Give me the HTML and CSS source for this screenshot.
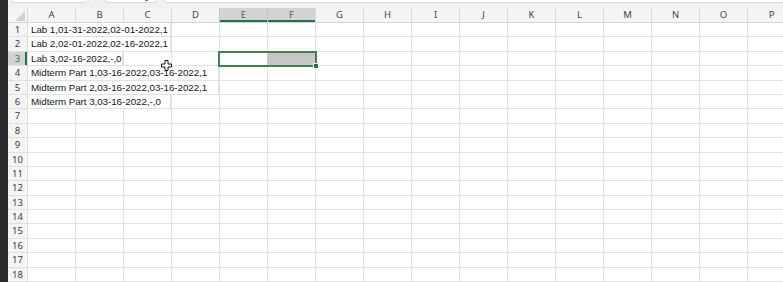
FILE: index.html
```html
<!DOCTYPE html>
<html>
<head>
<meta charset="utf-8">
<link rel="stylesheet" href="styles.css">
</head>
<body>
<div class="app">
  <div class="side"></div>
  <div class="main">
    <div class="topbar">
      <div class="box b1"></div>
      <div class="box b2"><span class="arrow"></span></div>
      <div class="box b3"></div>
    </div>
    <div class="sheet">
      <div class="hrow">
        <div class="corner"><svg width="19" height="15" viewBox="0 0 19 15"><polygon points="17,3 17,13 7,13" fill="#d0d0d0"/></svg></div>
        <div class="heads">
          <div class="ch">A</div><div class="ch">B</div><div class="ch">C</div><div class="ch">D</div>
          <div class="ch on">E</div><div class="ch on">F</div><div class="ch">G</div><div class="ch">H</div>
          <div class="ch">I</div><div class="ch">J</div><div class="ch">K</div><div class="ch">L</div>
          <div class="ch">M</div><div class="ch">N</div><div class="ch">O</div><div class="ch">P</div>
        </div>
      </div>
      <div class="row"><div class="rh">1</div><div class="cells"><div class="cell s3">Lab 1,01-31-2022,02-01-2022,1</div></div></div>
      <div class="row"><div class="rh">2</div><div class="cells"><div class="cell s3">Lab 2,02-01-2022,02-16-2022,1</div></div></div>
      <div class="row"><div class="rh on">3</div><div class="cells"><div class="cell s2">Lab 3,02-16-2022,-,0</div></div></div>
      <div class="row"><div class="rh">4</div><div class="cells"><div class="cell s4">Midterm Part 1,03-16-2022,03-16-2022,1</div></div></div>
      <div class="row"><div class="rh">5</div><div class="cells"><div class="cell s4">Midterm Part 2,03-16-2022,03-16-2022,1</div></div></div>
      <div class="row"><div class="rh">6</div><div class="cells"><div class="cell s3">Midterm Part 3,03-16-2022,-,0</div></div></div>
      <div class="row"><div class="rh">7</div><div class="cells"></div></div>
      <div class="row"><div class="rh">8</div><div class="cells"></div></div>
      <div class="row"><div class="rh">9</div><div class="cells"></div></div>
      <div class="row"><div class="rh">10</div><div class="cells"></div></div>
      <div class="row"><div class="rh">11</div><div class="cells"></div></div>
      <div class="row"><div class="rh">12</div><div class="cells"></div></div>
      <div class="row"><div class="rh">13</div><div class="cells"></div></div>
      <div class="row"><div class="rh">14</div><div class="cells"></div></div>
      <div class="row"><div class="rh">15</div><div class="cells"></div></div>
      <div class="row"><div class="rh">16</div><div class="cells"></div></div>
      <div class="row"><div class="rh">17</div><div class="cells"></div></div>
      <div class="row"><div class="rh">18</div><div class="cells"></div></div>
      <div class="sel"><div class="handle"></div></div>
      <svg class="cursor" width="11" height="11" viewBox="0 0 11 11">
        <path d="M4 0.5 H7 V4 H10.5 V7 H7 V10.5 H4 V7 H0.5 V4 H4 Z" fill="#fff" stroke="#111" stroke-width="1"/>
      </svg>
    </div>
  </div>
</div>
</body>
</html>
```
FILE: styles.css
```css
html, body {
  margin: 0;
  padding: 0;
  background: #ffffff;
}
body {
  width: 783px;
  height: 282px;
  overflow: hidden;
}
.app {
  display: flex;
  width: 783px;
  height: 282px;
  overflow: hidden;
}
.side {
  width: 8px;
  flex: none;
  background: #2a2a2c;
}
.main {
  flex: 1;
  min-width: 0;
  overflow: hidden;
  background: #ffffff;
}
.topbar {
  position: relative;
  height: 8px;
  background: #f0f0f0;
  overflow: hidden;
}
.box {
  position: absolute;
  top: -5px;
  height: 8px;
  background: #ffffff;
  border: 1px solid #d6d6d6;
  border-radius: 0 0 4px 4px;
  box-sizing: border-box;
}
.b1 { left: 2px; width: 79px; }
.b2 { left: 96px; width: 54px; }
.b3 { left: 155px; width: 640px; }
.arrow {
  position: absolute;
  left: 40px;
  top: 4px;
  width: 3px;
  height: 1px;
  background: #777;
}
.sheet {
  position: relative;
}
.hrow {
  display: flex;
  height: 15px;
  box-sizing: border-box;
  border-bottom: 1px solid #d4d4d4;
  background: #f5f5f5;
}
.corner {
  width: 19px;
  flex: none;
  height: 14px;
  overflow: hidden;
}
.corner svg { display: block; }
.heads {
  display: grid;
  grid-template-columns: repeat(16, 48px);
  flex: none;
}
.ch {
  border-left: 1px solid #dadada;
  box-sizing: border-box;
  text-align: center;
  font-family: "Noto Sans", "Open Sans", sans-serif;
  font-size: 9.5px;
  line-height: 14px;
  color: #444444;
}
.ch.on {
  background: #d3d3d3;
  color: #3d6b4b;
  box-shadow: inset 0 -2px 0 #217346;
  border-left-color: #c4c4c4;
}
.row {
  display: flex;
  height: 14.4px;
  box-sizing: border-box;
  border-bottom: 1px solid #e1e1e1;
}
.rh {
  width: 19px;
  flex: none;
  background: #f5f5f5;
  text-align: center;
  font-family: "Noto Sans", "Open Sans", sans-serif;
  font-size: 9.5px;
  line-height: 13.4px;
  color: #3a3a3a;
}
.rh.on {
  background: #d3d3d3;
  color: #3d6b4b;
  box-shadow: inset -2px 0 0 #217346;
}
.cells {
  flex: 1;
  display: grid;
  grid-template-columns: repeat(16, 48px);
  background: repeating-linear-gradient(90deg, #e1e1e1 0 1px, transparent 1px 48px);
}
.cell {
  background: #ffffff;
  border-left: 1px solid #dcdcdc;
  border-right: 1px solid #e1e1e1;
  box-sizing: border-box;
  padding-left: 3px;
  white-space: nowrap;
  overflow: visible;
  font-family: "Liberation Sans", Arial, sans-serif;
  font-size: 9.8px;
  line-height: 13.4px;
  color: #12172a;
  letter-spacing: -0.05px;
}
.s2 { grid-column: span 2; }
.s3 { grid-column: span 3; }
.s4 { grid-column: span 4; }
.sel {
  position: absolute;
  left: 210px;
  top: 43px;
  width: 99px;
  height: 16px;
  box-sizing: border-box;
  border: 2px solid #3f8055;
  background: linear-gradient(90deg, transparent 0 47px, #c6c6c6 47px 100%);
}
.handle {
  position: absolute;
  right: -4px;
  bottom: -4px;
  width: 4px;
  height: 4px;
  background: #217346;
  border: 1px solid #ffffff;
}
.cursor {
  position: absolute;
  left: 153px;
  top: 52px;
}
```
